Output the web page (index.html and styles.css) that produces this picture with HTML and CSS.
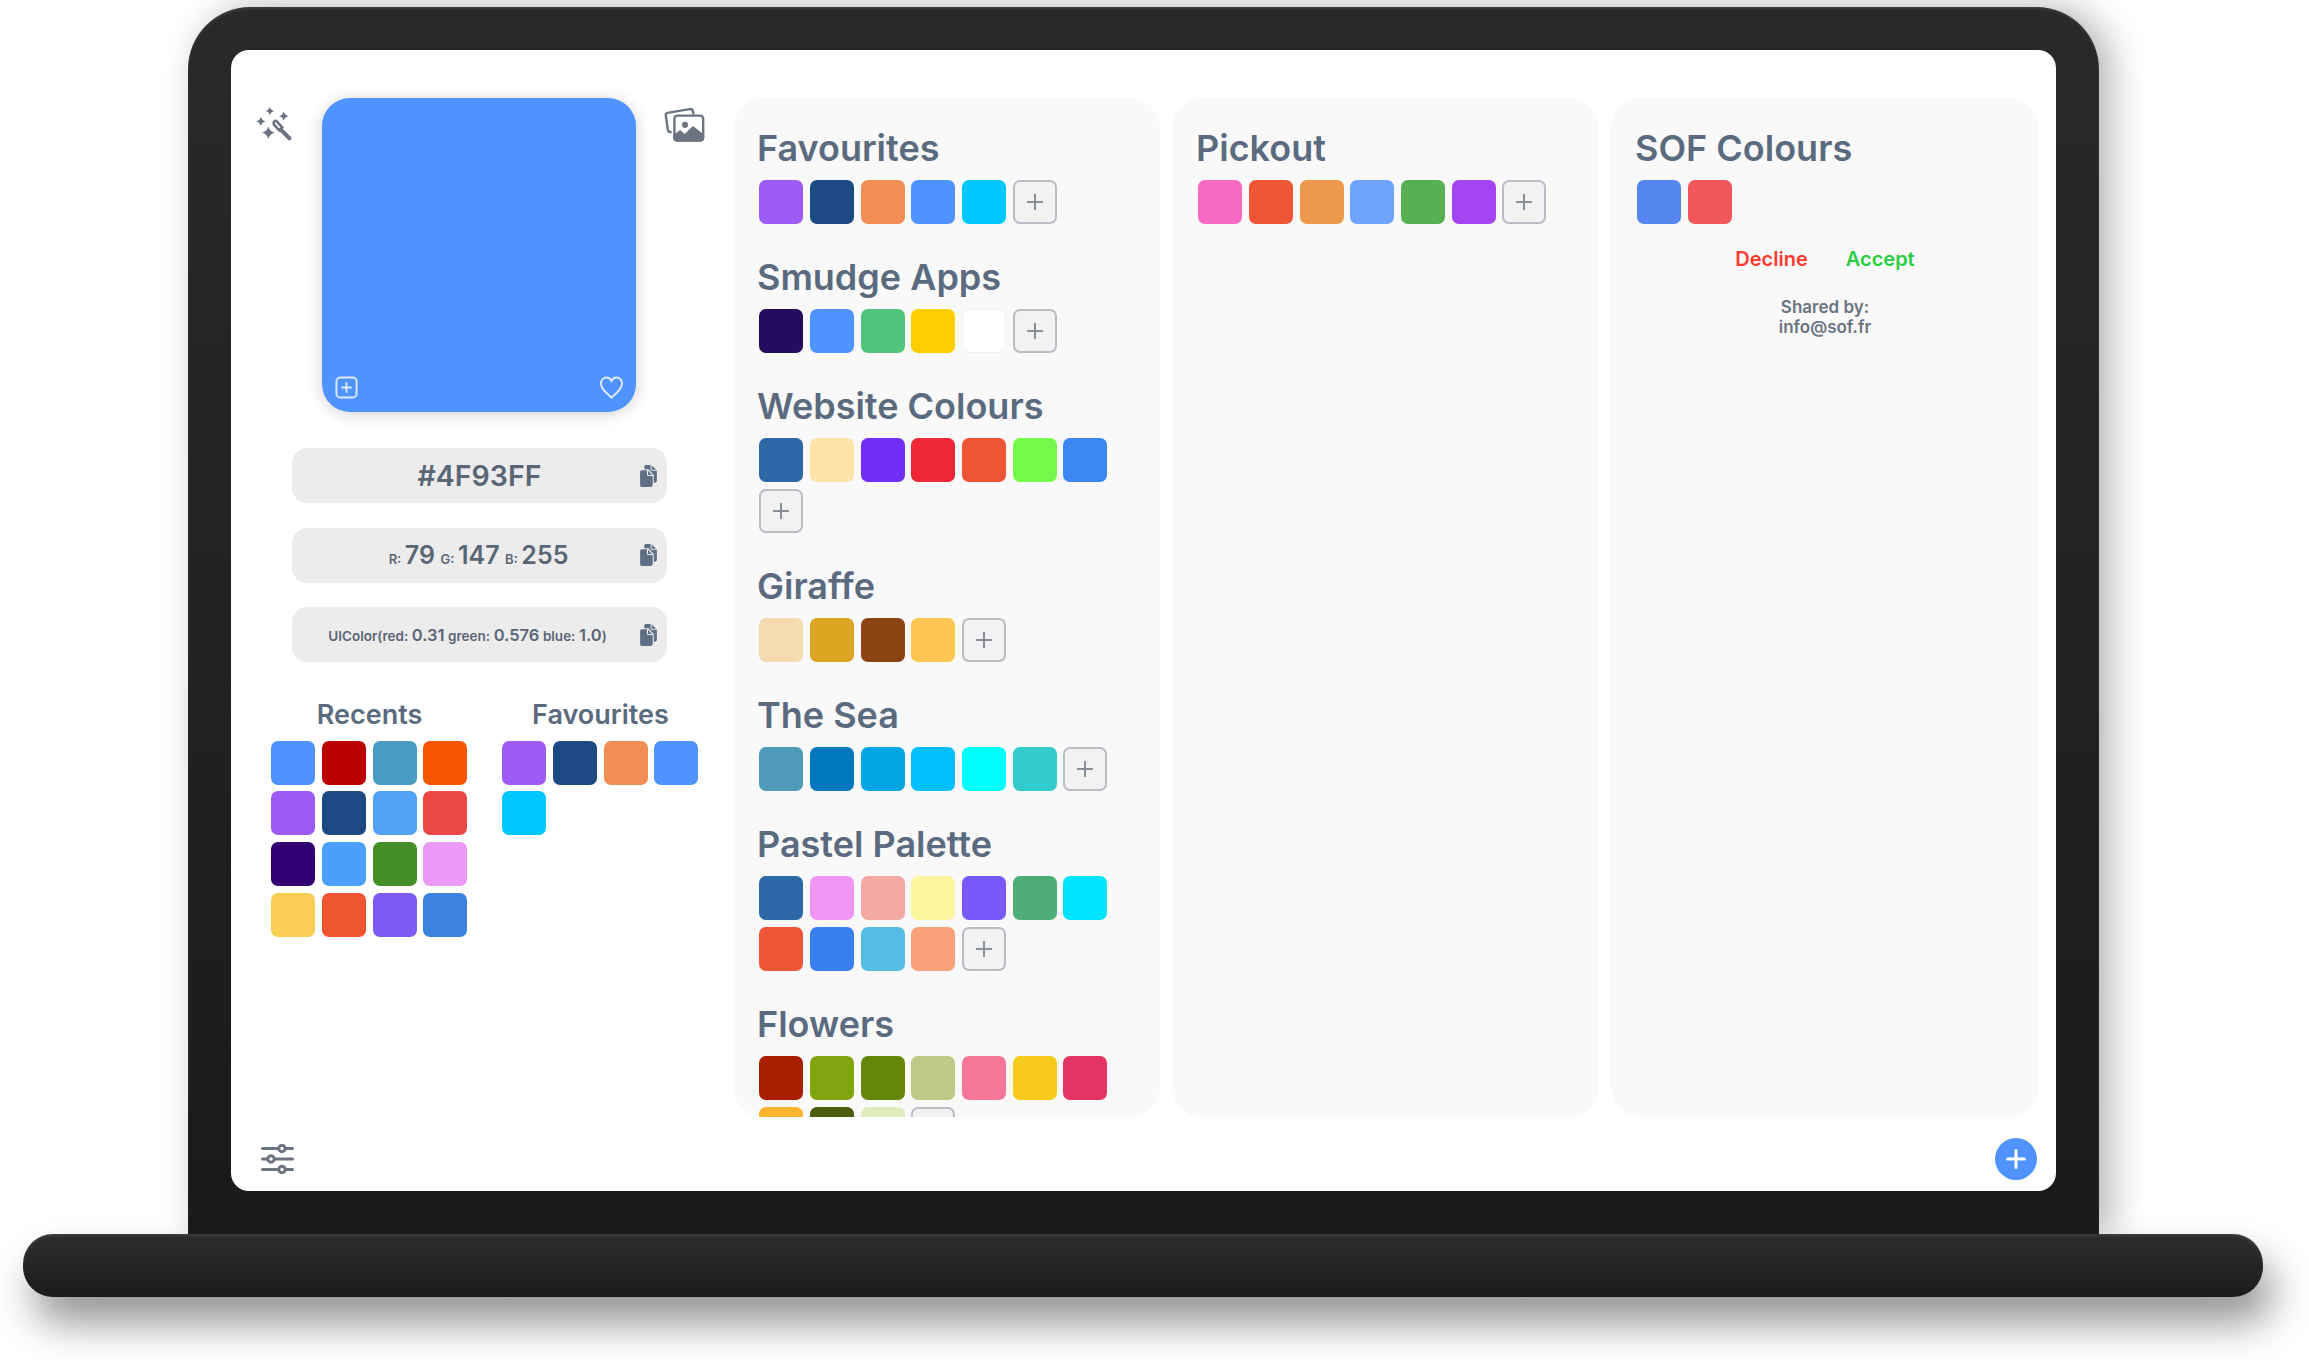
FILE: index.html
```html
<!DOCTYPE html>
<html lang="en">

<head>
    <meta charset="UTF-8">
    <title>Colour Picker</title>
    <link rel="stylesheet" href="styles.css">
</head>

<body>
    <div class="laptop">
        <div class="lid">
            <div class="screen">
                <div class="main">
                    <!-- Left column -->
                    <div class="picker">
                        <div class="picker-top">
                            <svg class="tool-icon" viewBox="0 0 100 96">
                                <path class="ico-fill" d="M39 1Q41 11 51 13Q41 15 39 25Q37 15 27 13Q37 11 39 1Z" />
                                <path class="ico-fill" d="M76 14Q78 25 89 27Q78 29 76 40Q74 29 63 27Q74 25 76 14Z" />
                                <path class="ico-fill" d="M15 28Q17 39 28 41Q17 43 15 54Q13 43 2 41Q13 39 15 28Z" />
                                <path class="ico-fill" d="M35 54Q38 68 52 71Q38 74 35 88Q32 74 18 71Q32 68 35 54Z" />
                                <path class="ico-line" d="M50 42 Q54 37 58 42 L72 57 L64 65 L50 50 Q47 46 50 42Z" />
                                <path class="ico-thick" d="M70 65 L91 86" />
                            </svg>
                            <div class="preview">
                                <svg class="preview-icon" viewBox="0 0 24 24">
                                    <rect x="1.5" y="1.5" width="21" height="21" rx="4" />
                                    <path d="M12 6.5V17.5M6.5 12H17.5" />
                                </svg>
                                <svg class="preview-icon" viewBox="0 0 24 24">
                                    <path d="M12 22.5C7 18 1 13.5 1 7.8C1 4 3.8 1.5 6.8 1.5C9 1.5 11 2.8 12 5C13 2.8 15 1.5 17.2 1.5C20.2 1.5 23 4 23 7.8C23 13.5 17 18 12 22.5Z" />
                                </svg>
                            </div>
                            <svg class="tool-icon photo-icon" viewBox="0 0 115 105">
                                <path class="ico-line" d="M20 76H16Q10 76 9 70L3 28Q2 22 8 20L72 9Q80 8 82 15L84 25" />
                                <rect class="ico-line" x="28" y="28" width="84" height="72" rx="9" />
                                <circle class="ico-fill" cx="59" cy="55" r="9" />
                                <path class="ico-fill" d="M25 84L45 70L58 82L82 58L115 84V94Q115 104 104 104H36Q25 104 25 94Z" />
                            </svg>
                        </div>

                        <div class="value-box hex-box">
                            <span class="value hex-value">#4F93FF</span>
                            <svg class="copy-icon" viewBox="0 0 16 21">
                                <path d="M5.5 0H10V4Q10 5.5 11.5 5.5H16V15Q16 17 14 17H13V9.5L8 4H4V1.5Q4 0 5.5 0Z" />
                                <path d="M11 0.5L15.5 4.5H11.5Q11 4.5 11 4Z" />
                                <path d="M1.5 5H6.5V9Q6.5 10.5 8 10.5H12V19Q12 21 10 21H1.5Q0 21 0 19V6.5Q0 5 1.5 5Z" />
                                <path d="M7.5 5.5L11.5 9.5H8Q7.5 9.5 7.5 9Z" />
                            </svg>
                        </div>
                        <div class="value-box rgb-box">
                            <span class="value"><small>R:</small> <b>79</b> <small>G:</small> <b>147</b> <small>B:</small> <b>255</b></span>
                            <svg class="copy-icon" viewBox="0 0 16 21">
                                <path d="M5.5 0H10V4Q10 5.5 11.5 5.5H16V15Q16 17 14 17H13V9.5L8 4H4V1.5Q4 0 5.5 0Z" />
                                <path d="M11 0.5L15.5 4.5H11.5Q11 4.5 11 4Z" />
                                <path d="M1.5 5H6.5V9Q6.5 10.5 8 10.5H12V19Q12 21 10 21H1.5Q0 21 0 19V6.5Q0 5 1.5 5Z" />
                                <path d="M7.5 5.5L11.5 9.5H8Q7.5 9.5 7.5 9Z" />
                            </svg>
                        </div>
                        <div class="value-box ui-box">
                            <span class="value"><small>UIColor(red:</small> <b>0.31</b> <small>green:</small> <b>0.576</b> <small>blue:</small> <b>1.0</b><small>)</small></span>
                            <svg class="copy-icon" viewBox="0 0 16 21">
                                <path d="M5.5 0H10V4Q10 5.5 11.5 5.5H16V15Q16 17 14 17H13V9.5L8 4H4V1.5Q4 0 5.5 0Z" />
                                <path d="M11 0.5L15.5 4.5H11.5Q11 4.5 11 4Z" />
                                <path d="M1.5 5H6.5V9Q6.5 10.5 8 10.5H12V19Q12 21 10 21H1.5Q0 21 0 19V6.5Q0 5 1.5 5Z" />
                                <path d="M7.5 5.5L11.5 9.5H8Q7.5 9.5 7.5 9Z" />
                            </svg>
                        </div>

                        <div class="quick">
                            <div class="quick-col">
                                <h3>Recents</h3>
                                <div class="swatches">
                                    <span class="swatch" style="background:#4f93ff"></span>
                                    <span class="swatch" style="background:#bb0000"></span>
                                    <span class="swatch" style="background:#4a9bc1"></span>
                                    <span class="swatch" style="background:#f55600"></span>
                                    <span class="swatch" style="background:#9e5bf6"></span>
                                    <span class="swatch" style="background:#1e4a84"></span>
                                    <span class="swatch" style="background:#52a3f8"></span>
                                    <span class="swatch" style="background:#ec4845"></span>
                                    <span class="swatch" style="background:#330073"></span>
                                    <span class="swatch" style="background:#4b9ef9"></span>
                                    <span class="swatch" style="background:#468f28"></span>
                                    <span class="swatch" style="background:#ea99f7"></span>
                                    <span class="swatch" style="background:#f8cf52"></span>
                                    <span class="swatch" style="background:#ee5530"></span>
                                    <span class="swatch" style="background:#7d5bf5"></span>
                                    <span class="swatch" style="background:#3c83e0"></span>
                                </div>
                            </div>
                            <div class="quick-col">
                                <h3>Favourites</h3>
                                <div class="swatches">
                                    <span class="swatch" style="background:#9e5bf6"></span>
                                    <span class="swatch" style="background:#1e4a84"></span>
                                    <span class="swatch" style="background:#f08e55"></span>
                                    <span class="swatch" style="background:#4f93ff"></span>
                                    <span class="swatch" style="background:#00c7ff"></span>
                                </div>
                            </div>
                        </div>
                    </div>

                    <!-- Palettes -->
                    <div class="panel">
                        <div class="palette">
                            <h2>Favourites</h2>
                            <div class="swatches">
                                <span class="swatch" style="background:#9e5bf6"></span>
                                <span class="swatch" style="background:#1e4a84"></span>
                                <span class="swatch" style="background:#f08e55"></span>
                                <span class="swatch" style="background:#4f93ff"></span>
                                <span class="swatch" style="background:#00c7ff"></span>
                                <span class="swatch add-swatch"></span>
                            </div>
                        </div>
                        <div class="palette">
                            <h2>Smudge Apps</h2>
                            <div class="swatches">
                                <span class="swatch" style="background:#260c5e"></span>
                                <span class="swatch" style="background:#4f93ff"></span>
                                <span class="swatch" style="background:#50c37c"></span>
                                <span class="swatch" style="background:#ffce00"></span>
                                <span class="swatch white-swatch"></span>
                                <span class="swatch add-swatch"></span>
                            </div>
                        </div>
                        <div class="palette">
                            <h2>Website Colours</h2>
                            <div class="swatches">
                                <span class="swatch" style="background:#2d69a7"></span>
                                <span class="swatch" style="background:#fde3a7"></span>
                                <span class="swatch" style="background:#722ef5"></span>
                                <span class="swatch" style="background:#ee2737"></span>
                                <span class="swatch" style="background:#ee5435"></span>
                                <span class="swatch" style="background:#75f94a"></span>
                                <span class="swatch" style="background:#3c87f1"></span>
                                <span class="swatch add-swatch"></span>
                            </div>
                        </div>
                        <div class="palette">
                            <h2>Giraffe</h2>
                            <div class="swatches">
                                <span class="swatch" style="background:#f4dcb0"></span>
                                <span class="swatch" style="background:#daa520"></span>
                                <span class="swatch" style="background:#8b4513"></span>
                                <span class="swatch" style="background:#fdc551"></span>
                                <span class="swatch add-swatch"></span>
                            </div>
                        </div>
                        <div class="palette">
                            <h2>The Sea</h2>
                            <div class="swatches">
                                <span class="swatch" style="background:#4f9ab8"></span>
                                <span class="swatch" style="background:#0077be"></span>
                                <span class="swatch" style="background:#00a5e4"></span>
                                <span class="swatch" style="background:#00bfff"></span>
                                <span class="swatch" style="background:#00ffff"></span>
                                <span class="swatch" style="background:#33cccc"></span>
                                <span class="swatch add-swatch"></span>
                            </div>
                        </div>
                        <div class="palette">
                            <h2>Pastel Palette</h2>
                            <div class="swatches">
                                <span class="swatch" style="background:#2d69a7"></span>
                                <span class="swatch" style="background:#f196f2"></span>
                                <span class="swatch" style="background:#f4a8a2"></span>
                                <span class="swatch" style="background:#fdf6a1"></span>
                                <span class="swatch" style="background:#7659f8"></span>
                                <span class="swatch" style="background:#4fae78"></span>
                                <span class="swatch" style="background:#00e5ff"></span>
                                <span class="swatch" style="background:#ef5537"></span>
                                <span class="swatch" style="background:#3880ef"></span>
                                <span class="swatch" style="background:#55bce4"></span>
                                <span class="swatch" style="background:#f9a37a"></span>
                                <span class="swatch add-swatch"></span>
                            </div>
                        </div>
                        <div class="palette">
                            <h2>Flowers</h2>
                            <div class="swatches">
                                <span class="swatch" style="background:#a91f00"></span>
                                <span class="swatch" style="background:#80a50e"></span>
                                <span class="swatch" style="background:#638809"></span>
                                <span class="swatch" style="background:#bec985"></span>
                                <span class="swatch" style="background:#f67699"></span>
                                <span class="swatch" style="background:#f6cb1b"></span>
                                <span class="swatch" style="background:#e23563"></span>
                                <span class="swatch" style="background:#feb32e"></span>
                                <span class="swatch" style="background:#4a5d0c"></span>
                                <span class="swatch" style="background:#dfedc0"></span>
                                <span class="swatch add-swatch"></span>
                            </div>
                        </div>
                    </div>

                    <div class="panel">
                        <div class="palette">
                            <h2>Pickout</h2>
                            <div class="swatches">
                                <span class="swatch" style="background:#f66ac4"></span>
                                <span class="swatch" style="background:#ef5636"></span>
                                <span class="swatch" style="background:#ec994b"></span>
                                <span class="swatch" style="background:#6fa4fb"></span>
                                <span class="swatch" style="background:#57b153"></span>
                                <span class="swatch" style="background:#a544f3"></span>
                                <span class="swatch add-swatch"></span>
                            </div>
                        </div>
                    </div>

                    <div class="panel">
                        <div class="palette">
                            <h2>SOF Colours</h2>
                            <div class="swatches">
                                <span class="swatch" style="background:#5585ee"></span>
                                <span class="swatch" style="background:#f2575b"></span>
                            </div>
                            <div class="share-actions">
                                <span class="decline">Decline</span>
                                <span class="accept">Accept</span>
                            </div>
                            <div class="shared-by">Shared by:<br>info@sof.fr</div>
                        </div>
                    </div>
                </div>

                <div class="footer">
                    <svg class="settings-icon" viewBox="0 0 34 30">
                        <path d="M1.5 4.5H31.5M1.5 15H31.5M1.5 25.5H31.5" />
                        <circle cx="21" cy="4.5" r="3.2" />
                        <circle cx="10" cy="15" r="3.2" />
                        <circle cx="21" cy="25.5" r="3.2" />
                    </svg>
                    <div class="add-button">
                        <svg viewBox="0 0 20 20">
                            <path d="M10 1.5V18.5M1.5 10H18.5" />
                        </svg>
                    </div>
                </div>
            </div>
        </div>
        <div class="base"></div>
    </div>
</body>

</html>
```

FILE: styles.css
```css
html,
body {
    height: 100%;
}

body {
    font-family: Inter, "Liberation Sans", sans-serif;
    margin: 0;
    padding: 0;
    background-color: #ffffff;
    color: #5a6b80;
}

.laptop {
    width: 2240px;
    padding: 7px 46px 63px 23px;
}

.lid {
    width: 1825px;
    height: 1141px;
    margin-left: 165px;
    padding: 43px 43px 43px 43px;
    border-radius: 62px 62px 0 0;
    background: linear-gradient(#292929, #1a1a1a);
    box-shadow: 12px 0 36px rgba(0, 0, 0, 0.3), inset 0 2px 3px rgba(255, 255, 255, 0.1);
}

.screen {
    height: 100%;
    display: flex;
    flex-direction: column;
    background: #ffffff;
    border-radius: 18px;
    overflow: hidden;
}

.base {
    height: 63px;
    border-radius: 30px;
    background: linear-gradient(#2b2b2b 20%, #1a1a1a);
    box-shadow: 10px 26px 40px rgba(0, 0, 0, 0.42), inset 0 2px 3px rgba(255, 255, 255, 0.1);
    position: relative;
}

.main {
    flex: 1;
    min-height: 0;
    display: flex;
    gap: 12px;
    padding: 48px 18px 0 0;
}

.footer {
    height: 74px;
    flex-shrink: 0;
    box-sizing: border-box;
    padding: 9px 19px 0 30px;
    display: flex;
    justify-content: space-between;
    align-items: center;
}

/* Left column */
.picker {
    width: 490px;
    flex-shrink: 0;
}

.picker-top {
    display: flex;
    align-items: flex-start;
    padding-left: 24px;
}

.tool-icon {
    width: 38px;
    height: 36px;
    margin-top: 8px;
    margin-right: 29px;
    flex-shrink: 0;
}

.photo-icon {
    width: 41px;
    margin-left: 28px;
    margin-right: 0;
}

.ico-fill {
    fill: #6b7480;
}

.ico-line {
    fill: none;
    stroke: #6b7480;
    stroke-width: 7;
}

.ico-thick {
    fill: none;
    stroke: #6b7480;
    stroke-width: 11;
    stroke-linecap: round;
}

.preview {
    width: 314px;
    height: 314px;
    box-sizing: border-box;
    padding: 13px;
    background: #4f93ff;
    border-radius: 28px;
    box-shadow: 0 2px 16px rgba(0, 0, 0, 0.18);
    display: flex;
    justify-content: space-between;
    align-items: flex-end;
}

.preview-icon {
    width: 23px;
    height: 23px;
    fill: none;
    stroke: #dfeaff;
    stroke-width: 2;
}

.value-box {
    width: 375px;
    height: 55px;
    margin: 24.5px 0 0 61px;
    background: #ececec;
    border-radius: 15px;
    display: grid;
    grid-template-columns: 40px 1fr 40px;
    align-items: center;
}

.hex-box {
    margin-top: 36px;
}

.ui-box {
    grid-template-columns: 16px 1fr 40px;
}

.value {
    grid-column: 2;
    text-align: center;
    color: #5a6676;
    font-size: 14px;
    font-weight: 600;
    white-space: nowrap;
}

.value.hex-value {
    font-size: 28.5px;
}

.value b {
    font-weight: 600;
}

.value small {
    font-size: 13px;
    font-weight: 600;
}

.rgb-box b {
    font-size: 25px;
    margin-right: 2px;
}

.ui-box b {
    font-size: 16.5px;
}

.ui-box small {
    font-size: 13.5px;
}

.copy-icon {
    grid-column: 3;
    justify-self: end;
    margin-right: 10px;
    width: 17px;
    height: 22px;
    fill: #5f6f85;
}

.quick {
    display: flex;
    gap: 28px;
    margin: 33px 0 0 37px;
}

.quick-col {
    width: 203px;
}

.quick-col h3 {
    margin: 0 0 2.5px;
    font-size: 27px;
    line-height: 40px;
    font-weight: 600;
    text-align: center;
}

/* Swatches */
.swatches {
    display: flex;
    flex-wrap: wrap;
}

.panel .swatches {
    margin-left: -1px;
}

.swatch {
    width: 44px;
    height: 44px;
    margin: 3.33px;
    border-radius: 7px;
    box-sizing: border-box;
}

.white-swatch {
    background: #ffffff;
    border: 1px solid #f1f1f1;
}

.add-swatch {
    background: #f2f2f3 linear-gradient(#8a909a, #8a909a) center / 16px 2px no-repeat;
    border: 2px solid #b9bdc5;
    position: relative;
}

.add-swatch::after {
    content: "";
    position: absolute;
    left: 50%;
    top: 50%;
    width: 2px;
    height: 16px;
    margin: -8px 0 0 -1px;
    background: #8a909a;
}

/* Palette panels */
.panel {
    flex: 1;
    padding: 27.67px 23px 0 24px;
    background: #f9f9f9;
    border-radius: 30px;
    overflow: hidden;
}

.palette {
    margin-bottom: 27.5px;
}

.palette h2 {
    margin: 0 0 7px;
    font-size: 36px;
    line-height: 44px;
    font-weight: 600;
}

.share-actions {
    display: flex;
    justify-content: center;
    gap: 38px;
    margin-top: 17.5px;
    font-size: 20px;
    line-height: 28px;
    font-weight: 600;
}

.decline {
    color: #ff3b30;
}

.accept {
    color: #28cd41;
}

.shared-by {
    margin-top: 24.5px;
    text-align: center;
    font-size: 17px;
    line-height: 20px;
    font-weight: 600;
    color: #6b7480;
}

/* Footer */
.settings-icon {
    width: 34px;
    height: 30px;
    fill: #ffffff;
    stroke: #6b7480;
    stroke-width: 3;
    stroke-linecap: round;
}

.add-button {
    width: 42px;
    height: 42px;
    border-radius: 50%;
    background: #4f93ff;
    display: flex;
    align-items: center;
    justify-content: center;
}

.add-button svg {
    width: 20px;
    height: 20px;
    fill: none;
    stroke: #ffffff;
    stroke-width: 3;
    stroke-linecap: round;
}
```
